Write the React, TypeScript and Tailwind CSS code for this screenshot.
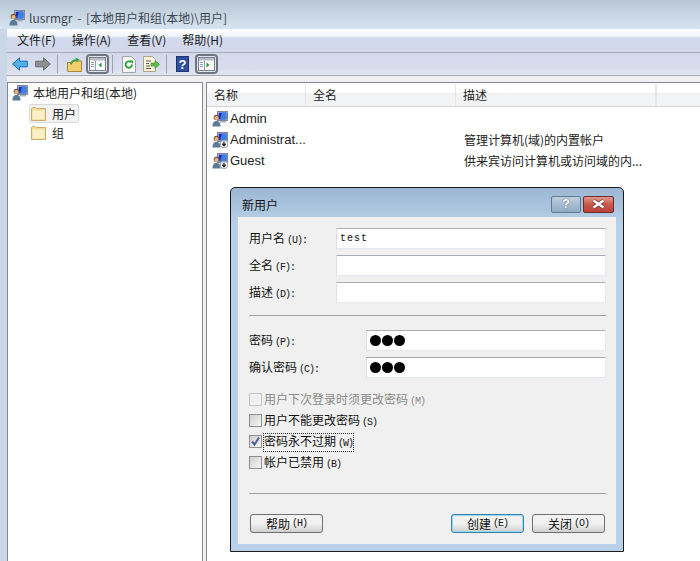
import React from "react";

const cjk = "font-['Noto_Sans_CJK_SC','Liberation_Sans',sans-serif]";

// little user/monitor glyph used for the tree root and the list rows
function UserIcon({ disabled = false }: { disabled?: boolean }) {
    return (
        <svg width="16" height="16" viewBox="0 0 16 16" className="shrink-0">
            <rect x="5.5" y="0.5" width="10" height="9" fill="#e8ecf2" stroke="#7d8796" />
            <path d="M6.5 1.5h8v7h-8z" fill="#1c2fb8" />
            <path d="M10 1.5h4.5v7H8z" fill="#3d7fe0" />
            <path d="M8 10h6v1.5H8z" fill="#a9b1bc" />
            <circle cx="4.5" cy="6.5" r="2.8" fill="#7a5230" />
            <circle cx="4.5" cy="7" r="2" fill="#e2b98d" />
            <path d="M0.5 15.5c0-4 1.5-5.5 4-5.5s4 1.5 4 5.5z" fill="#5b7a95" />
            {disabled && (
                <g>
                    <circle cx="12" cy="12" r="3.8" fill="#fff" stroke="#9aa0a8" />
                    <path d="M12 9.5v4M10.2 11.8l1.8 2 1.8-2" fill="none" stroke="#222" strokeWidth="1.3" />
                </g>
            )}
        </svg>
    );
}

function FolderIcon() {
    return (
        <svg width="15" height="14" viewBox="0 0 15 14" className="shrink-0">
            <path d="M0.5 1.5l1-1h3l1 1h9v12h-14z" fill="#f3dc9a" stroke="#c9ad6c" />
            <path d="M1.5 3.5h12v9h-12z" fill="#fbefc6" />
        </svg>
    );
}

function PaneToggle({ side }: { side: "left" | "right" }) {
    return (
        <div className="w-[23px] h-[20px] rounded-[4px] border-2 border-[#70757d] bg-[#dfe3ec] flex items-center justify-center">
            <svg width="17" height="14" viewBox="0 0 17 14">
                <rect x="0.5" y="0.5" width="16" height="13" fill="#fafafa" stroke="#7b818c" />
                <path d="M1 1h15v2.5H1z" fill="#b7bdc9" />
                <path d="M6.5 3.5v10" stroke="#9aa0aa" />
                {side === "left" ? (
                    <path d="M12.5 5.5v5l-3-2.5z" fill="#1f9d3a" />
                ) : (
                    <path d="M8.5 5.5v5l3-2.5z" fill="#1f9d3a" />
                )}
                <path d="M2 5.5h3M2 7.5h3M2 9.5h3" stroke="#7fa4d4" />
            </svg>
        </div>
    );
}

function ToolSep() {
    return <div className="w-px h-[18px] bg-[#9ea3ad]" />;
}

function Toolbar() {
    return (
        <div className="h-[23px] shrink-0 flex items-center pl-[5px] bg-[linear-gradient(#d3d9ec,#d8deee_70%,#e3e6f0)] border-b border-[#a9abb3]">
            <svg width="16" height="14" viewBox="0 0 16 14">
                <path d="M0.7 7L7.5 0.8v3.4h7.8v5.6H7.5v3.4z" fill="#4fb1ec" stroke="#1b6cb5" />
            </svg>
            <svg width="16" height="14" viewBox="0 0 16 14" className="ml-[7px]">
                <path d="M15.3 7L8.5 0.8v3.4H0.7v5.6h7.8v3.4z" fill="#8d8f92" stroke="#66686c" />
            </svg>
            <div className="ml-[6px]"><ToolSep /></div>
            <svg width="15" height="15" viewBox="0 0 15 15" className="ml-[9px]">
                <path d="M0.5 5.5h5l1-1.5h8v10.5H0.5z" fill="#f0cf6e" stroke="#a8873c" />
                <path d="M3 7C4 4 6 2 9 2.2L8.2 0.6l4.4 2-3.2 3 0.2-1.7C7.5 3.7 5.5 5 4.5 8z" fill="#3aa33f" />
            </svg>
            <div className="ml-[4px]"><PaneToggle side="left" /></div>
            <div className="ml-[3px]"><ToolSep /></div>
            <svg width="14" height="17" viewBox="0 0 14 17" className="ml-[9px]">
                <path d="M0.5 0.5h9l4 4v12H0.5z" fill="#f7f8f4" stroke="#a3a6a0" />
                <path d="M10 8.5a3.2 3.2 0 1 1-1-2.3" fill="none" stroke="#2aa13a" strokeWidth="1.8" />
                <path d="M7.5 4.5l3.5 0v3.5z" fill="#2aa13a" />
            </svg>
            <svg width="17" height="16" viewBox="0 0 17 16" className="ml-[7px]">
                <path d="M0.5 0.5h9l3 3v12h-12z" fill="#fbf6dc" stroke="#a9a585" />
                <path d="M3 5h5M3 7.5h3M3 10h4M3 12.5h5" stroke="#5c5c50" />
                <path d="M8 7h4V4.5L16.5 8.5 12 12.5V10H8z" fill="#5dbf4a" stroke="#3a8a2e" strokeWidth="0.6" />
            </svg>
            <div className="ml-[6px]"><ToolSep /></div>
            <div className="ml-[9px] w-[13px] h-[16px] bg-[#2f4f9c] border border-[#1d3270] flex items-center justify-center text-white text-[13px] font-bold font-['Liberation_Sans',sans-serif] leading-none">
                ?
            </div>
            <div className="ml-[6px]"><PaneToggle side="right" /></div>
        </div>
    );
}

function Field({ label, hot, left, children }: { label: string; hot: string; left: string; children?: React.ReactNode }) {
    return (
        <div className="flex items-center h-[21px]">
            <div className={`${left} shrink-0 flex items-baseline text-[12px] text-[#111] ${cjk}`}>
                {label}
                <span className="ml-[2px] text-[10px] tracking-[-1px] font-['Liberation_Mono',monospace]">{hot}</span>
            </div>
            <div className="flex-1 h-[21px] bg-white border border-[#abadb3] border-r-[#e3e9ef] border-b-[#e3e9ef] border-l-[#dbdfe6] flex items-center pl-[3px]">
                {children}
            </div>
        </div>
    );
}

function Dots() {
    return (
        <div className="flex gap-px">
            <span className="w-[11px] h-[11px] rounded-full bg-black" />
            <span className="w-[11px] h-[11px] rounded-full bg-black" />
            <span className="w-[11px] h-[11px] rounded-full bg-black" />
        </div>
    );
}

function Check({ label, hot, checked = false, disabled = false, focused = false }: { label: string; hot: string; checked?: boolean; disabled?: boolean; focused?: boolean }) {
    return (
        <div className="flex items-center h-[13px]">
            <div className={`w-[13px] h-[13px] border flex items-center justify-center ${disabled ? "border-[#c6c6c6] bg-[#f0f0f0]" : "border-[#8e8f8f] bg-[linear-gradient(135deg,#cfcfd0,#f6f6f6)]"}`}>
                {checked && (
                    <svg width="11" height="11" viewBox="0 0 11 11">
                        <path d="M2 5.5l2.5 3L9 1.5" fill="none" stroke="#4a5f97" strokeWidth="2" />
                    </svg>
                )}
            </div>
            <div className={`ml-[2px] mt-[1px] flex items-baseline leading-[14px] text-[12px] ${cjk} ${disabled ? "text-[#8a8a8a]" : "text-[#111]"} ${focused ? "outline-1 outline-dotted outline-[#333]" : ""}`}>
                {label}
                <span className="ml-[2px] text-[10px] tracking-[-1px] font-['Liberation_Mono',monospace]">{hot}</span>
            </div>
        </div>
    );
}

function DlgButton({ label, hot, primary = false }: { label: string; hot: string; primary?: boolean }) {
    return (
        <div className={`w-[73px] h-[19px] rounded-[3px] border flex items-center justify-center text-[12px] text-[#111] ${cjk} ${primary ? "border-[#3c7fb1] shadow-[inset_0_0_0_1px_#8fdcf5] bg-[linear-gradient(#f2f2f2_50%,#cfcfcf)]" : "border-[#707070] bg-[linear-gradient(#f2f2f2_50%,#cfcfcf)]"}`}>
            {label}
            <span className="ml-[2px] text-[10px] tracking-[-1px] font-['Liberation_Mono',monospace]">{hot}</span>
        </div>
    );
}

function Dialog() {
    return (
        <div className="absolute left-[230px] top-[187px] w-[394px] h-[365px] border border-[#1a1a1a] rounded-t-[5px] bg-[linear-gradient(#9cb7d3,#b9d1e8_10%,#b9d1e8)] flex flex-col shadow-[0_0_0_1px_rgba(255,255,255,0.5)]">
            <div className="h-[29px] shrink-0 flex items-center justify-between pl-[11px] pr-[9px] pt-[3px]">
                <span className={`mt-[2px] text-[12px] text-[#111] ${cjk}`}>新用户</span>
                <div className="flex gap-[2px]">
                    <div className="w-[30px] h-[17px] rounded-[2px] border border-[#5f7a96] bg-[linear-gradient(#bdcfe0,#a8bdd2_50%,#8fa9c4)] flex items-center justify-center text-white text-[13px] font-bold font-['Liberation_Sans',sans-serif] [text-shadow:0_0_1px_#333]">
                        ?
                    </div>
                    <div className="w-[31px] h-[17px] rounded-[2px] border border-[#6e2a2a] bg-[linear-gradient(#e09a8c,#c9584a_50%,#b8433a)] flex items-center justify-center">
                        <svg width="15" height="10" viewBox="0 0 15 10">
                            <path d="M2.5 1.5l10 7M12.5 1.5l-10 7" stroke="#5a2a2a" strokeWidth="3.6" />
                            <path d="M2.5 1.5l10 7M12.5 1.5l-10 7" stroke="#fff" strokeWidth="2.4" />
                        </svg>
                    </div>
                </div>
            </div>
            <div className="flex-1 mx-[7px] mb-[7px] bg-[#f0f0f0] flex flex-col pl-[11px] pr-[10px] pt-[11px]">
                <div className="flex flex-col gap-[6px]">
                    <Field label="用户名" hot="(U):" left="w-[87px]">
                        <span className="text-[10px] tracking-[1px] text-[#111] font-['Liberation_Mono',monospace]">test</span>
                    </Field>
                    <Field label="全名" hot="(F):" left="w-[87px]" />
                    <Field label="描述" hot="(D):" left="w-[87px]" />
                </div>
                <div className="h-px bg-[#a0a0a0] mt-[12px]" />
                <div className="flex flex-col gap-[6px] mt-[14px]">
                    <Field label="密码" hot="(P):" left="w-[117px]"><Dots /></Field>
                    <Field label="确认密码" hot="(C):" left="w-[117px]"><Dots /></Field>
                </div>
                <div className="flex flex-col gap-[8px] mt-[15px]">
                    <Check label="用户下次登录时须更改密码" hot="(M)" disabled />
                    <Check label="用户不能更改密码" hot="(S)" />
                    <Check label="密码永不过期" hot="(W)" checked focused />
                    <Check label="帐户已禁用" hot="(B)" />
                </div>
                <div className="h-px bg-[#a0a0a0] mt-[24px]" />
                <div className="flex justify-between items-center mt-[20px] pl-[1px] pr-[1px]">
                    <DlgButton label="帮助" hot="(H)" />
                    <div className="flex gap-[8px]">
                        <DlgButton label="创建" hot="(E)" primary />
                        <DlgButton label="关闭" hot="(O)" />
                    </div>
                </div>
            </div>
        </div>
    );
}

const rows = [
    { name: "Admin", desc: "", disabled: false },
    { name: "Administrat...", desc: "管理计算机(域)的内置帐户", disabled: true },
    { name: "Guest", desc: "供来宾访问计算机或访问域的内...", disabled: true },
];

export default function App() {
    return (
        <div className={`relative w-[700px] h-[561px] overflow-hidden flex flex-col bg-[#c9d7e6] ${cjk}`}>
            {/* title bar */}
            <div className="h-[29px] shrink-0 flex items-center pl-[9px] pt-[6px] bg-[linear-gradient(#bac8d6,#d6e4f1)]">
                <UserIcon />
                <span className="ml-[4px] text-[12px] text-[#3c4650] [word-spacing:2px]">lusrmgr - [本地用户和组(本地)\用户]</span>
            </div>

            <div className="flex-1 ml-[7px] flex flex-col min-h-0">
                {/* menu */}
                <div className="h-[24px] shrink-0 flex items-center gap-[16px] pl-[10px] pb-[1px] text-[12px] text-[#1a1a1a] bg-[linear-gradient(#fff,#f1f4fa_30%,#d3d9ec_40%)] border-b border-[#a9abb3]">
                    <span>文件(F)</span>
                    <span>操作(A)</span>
                    <span>查看(V)</span>
                    <span>帮助(H)</span>
                </div>
                <Toolbar />

                {/* panes */}
                <div className="flex-1 flex gap-[3px] min-h-0 pt-[6px] bg-[#f0f0f0]">
                    <div className="w-[196px] shrink-0 bg-white border border-b-0 border-[#828790] text-[12px] text-[#222]">
                        <div className="flex items-center h-[20px] pl-[4px] gap-[5px]">
                            <UserIcon />
                            <span>本地用户和组(本地)</span>
                        </div>
                        <div className="flex items-center h-[19px] mt-[1px] ml-[21px] w-[50px] pl-[1px] gap-[6px] rounded-[2px] border border-[#d9d9d9] bg-[#f2f2f2]">
                            <FolderIcon />
                            <span>用户</span>
                        </div>
                        <div className="flex items-center h-[20px] ml-[22px] pl-[1px] gap-[6px]">
                            <FolderIcon />
                            <span>组</span>
                        </div>
                    </div>
                    <div className="flex-1 bg-white border border-r-0 border-b-0 border-[#828790] text-[12px] text-[#222]">
                        <div className="h-[24px] flex border-b border-[#d5d5d5] pt-[1px] bg-[linear-gradient(#fff_40%,#f2f3f5_45%,#f2f3f5)]">
                            <div className="w-[99px] pl-[7px] border-r border-[#e3e4e6] flex items-center">名称</div>
                            <div className="w-[150px] pl-[7px] border-r border-[#e3e4e6] flex items-center">全名</div>
                            <div className="w-[201px] pl-[7px] border-r-2 border-[#e3e4e6] flex items-center">描述</div>
                        </div>
                        <div className="pt-[1px]">
                            {rows.map((r) => (
                                <div key={r.name} className="flex items-center h-[21px]">
                                    <div className="w-[250px] pl-[5px] flex items-center gap-[2px]">
                                        <UserIcon disabled={r.disabled} />
                                        <span className="text-[13px] font-['Liberation_Sans',sans-serif]">{r.name}</span>
                                    </div>
                                    <span className="pl-[7px]">{r.desc}</span>
                                </div>
                            ))}
                        </div>
                    </div>
                </div>
            </div>

            <Dialog />
        </div>
    );
}
